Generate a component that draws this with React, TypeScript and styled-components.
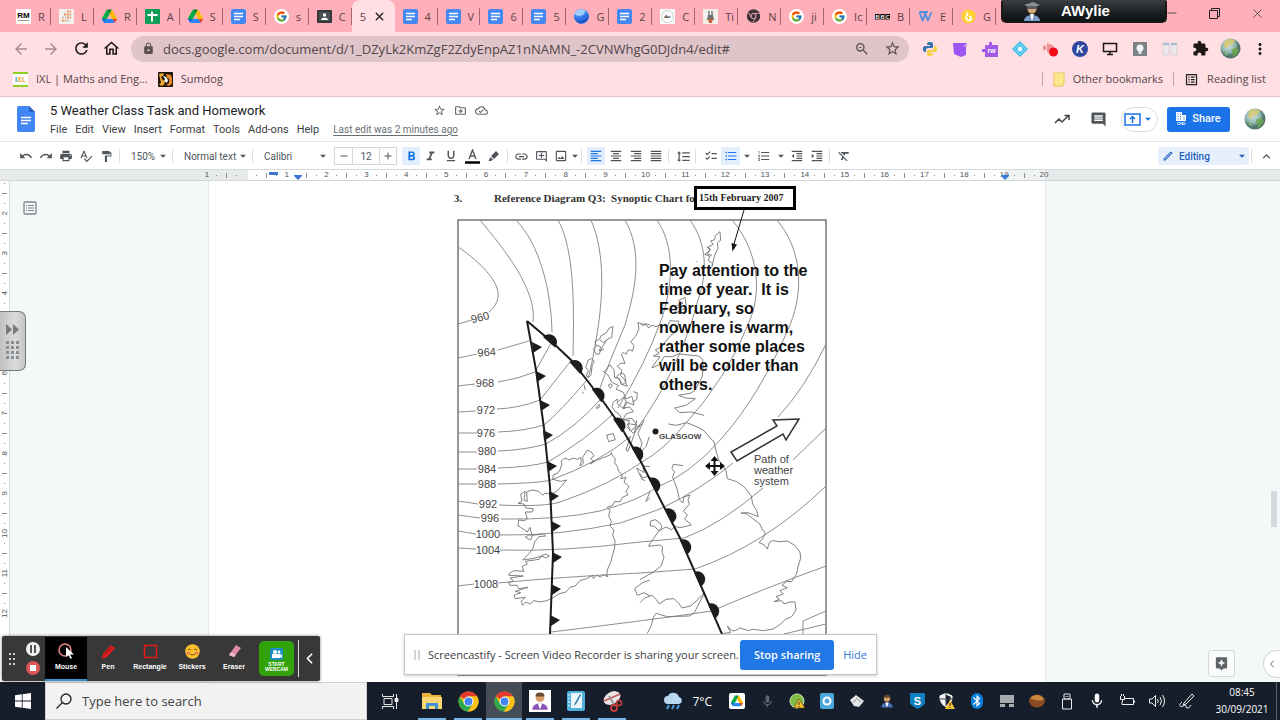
import React from 'react';
import styled, { createGlobalStyle } from 'styled-components';
import {
  MdUndo, MdRedo, MdPrint, MdSpellcheck, MdFormatPaint, MdFormatBold, MdFormatItalic, MdFormatUnderlined,
  MdLink, MdOutlineAddComment, MdOutlineImage, MdArrowDropDown, MdFormatAlignLeft, MdFormatAlignCenter,
  MdFormatAlignRight, MdFormatAlignJustify, MdFormatLineSpacing, MdChecklist, MdFormatListBulleted,
  MdFormatListNumbered, MdFormatIndentDecrease, MdFormatIndentIncrease, MdFormatClear, MdOutlineEdit,
  MdStarBorder, MdOutlineDriveFileMove, MdOutlineCloudDone, MdComment, MdExtension, MdLock, MdArrowBack,
  MdArrowForward, MdRefresh, MdOutlineHome, MdMoreVert, MdZoomOut, MdAdd, MdRemove,
  MdKeyboardArrowUp, MdOutlineListAlt, MdMic, MdBluetooth, MdAssistant,
} from 'react-icons/md';
import { FcGoogle } from 'react-icons/fc';
import { FaShieldAlt } from 'react-icons/fa';
import { Minus, X, ChevronLeft } from 'lucide-react';

const segoe = '"Open Sans", "Noto Sans", sans-serif';
const roboto = 'Roboto, "Liberation Sans", sans-serif';
const arial = '"Liberation Sans", Arial, sans-serif';

const GlobalStyle = createGlobalStyle`
  *, *::before, *::after { box-sizing: border-box; }
  body { margin: 0; overflow: hidden; font-family: ${roboto}; color: #3c4043; }
  button, input { font: inherit; color: inherit; margin: 0; }
  button { border: 0; padding: 0; background: none; display: flex; align-items: center; justify-content: center; }
  a { color: inherit; text-decoration: none; }
  svg { display: block; flex: none; }
`;

const Screen = styled.div`
  position: relative;
  display: flex;
  flex-direction: column;
  height: 100vh;
  overflow: hidden;
  background: #fff;
`;

/* ---------- browser chrome ---------- */

const TabStrip = styled.header`
  position: relative;
  display: flex;
  flex: none;
  height: 32px;
  padding-left: 8px;
  background: #ffafba;
  font-family: ${segoe};
`;
const Tabs = styled.nav`
  display: flex;
  flex: 1;
  min-width: 0;
`;
const Tab = styled.button<{ $active?: boolean }>`
  position: relative;
  flex: 1 1 0;
  min-width: 0;
  gap: 7px;
  padding: 0 4px 0 8px;
  justify-content: flex-start;
  font-size: 11px;
  color: #5d4247;
  background: ${(p) => (p.$active ? '#ffdfe3' : 'transparent')};
  border-radius: ${(p) => (p.$active ? '8px 8px 0 0' : '0')};
  &::after {
    content: '';
    position: absolute;
    right: 0;
    top: 8px;
    height: 17px;
    width: 1px;
    background: ${(p) => (p.$active ? 'transparent' : '#a5666f')};
  }
`;
const TabLabel = styled.span`
  white-space: nowrap;
`;
const WindowControls = styled.div`
  display: flex;
  justify-content: flex-end;
  flex: none;
  width: 284px;
  padding-right: 1px;
`;
const WindowButton = styled.button`
  width: 43px;
  height: 26px;
`;
const NameBadge = styled.div`
  position: absolute;
  right: 113px;
  top: 0;
  display: flex;
  align-items: center;
  gap: 20px;
  width: 166px;
  height: 23px;
  padding-left: 20px;
  border: 2px solid #17191b;
  border-top: 0;
  border-radius: 2px 2px 5px 5px;
  background: linear-gradient(#3a3e41, #1e2224 55%, #0e1011);
  color: #fff;
  font: bold 15px/20px ${arial};
`;
const AddressRow = styled.div`
  display: flex;
  align-items: center;
  flex: none;
  height: 33px;
  padding: 0 5px 0 6px;
  background: #ffdfe3;
`;
const NavButton = styled.button<{ $dim?: boolean }>`
  width: 30px;
  height: 28px;
  flex: none;
  color: ${(p) => (p.$dim ? '#a58d91' : '#1d1718')};
`;
const AddressPill = styled.div`
  display: flex;
  align-items: center;
  flex: 1;
  min-width: 0;
  height: 26px;
  margin: 0 6px 0 5px;
  padding: 0 2px 0 11px;
  border-radius: 13px;
  background: #dfc5c9;
  color: #5d5053;
`;
const AddressInput = styled.input`
  flex: 1;
  min-width: 0;
  margin-left: 8px;
  padding: 0;
  border: 0;
  outline: 0;
  background: none;
  font: 13px/20px ${segoe};
  color: #52464a;
`;
const Bookmarks = styled.nav`
  display: flex;
  align-items: center;
  flex: none;
  height: 32px;
  padding: 0 14px 3px 13px;
  background: #ffdfe3;
  border-bottom: 1px solid #dfc5c9;
  font: 11px/16px ${segoe};
  color: #54454a;
`;
const Bookmark = styled.a`
  display: flex;
  align-items: center;
  gap: 8px;
  margin-right: 10px;
  white-space: nowrap;
  &:last-child { margin-right: 0; }
`;
const BookmarkSpacer = styled.div`flex: 1;`;
const BookmarkRule = styled.span`
  width: 1px;
  height: 14px;
  margin-right: 10px;
  background: #c5a4a9;
`;

/* ---------- editor chrome ---------- */

const DocHeader = styled.header`
  display: flex;
  align-items: center;
  flex: none;
  height: 45px;
  padding: 0 14px 0 17px;
  border-bottom: 1px solid #e3e5e8;
`;
const TitleBlock = styled.div`
  display: flex;
  flex-direction: column;
  flex: 1;
  margin-left: 15px;
  padding-top: 1px;
  gap: 2px;
`;
const TitleRow = styled.div`
  display: flex;
  align-items: center;
  gap: 7px;
  height: 18px;
  color: #202124;
`;
const DocTitle = styled.h1`
  margin: 0;
  width: 375px;
  white-space: nowrap;
  font: 400 13px/18px ${roboto};
`;
const TitleButton = styled.button`
  width: 14px;
  height: 14px;
  color: #5f6368;
`;
const MenuRow = styled.nav`
  display: flex;
  align-items: center;
  gap: 8px;
  font-size: 11px;
  line-height: 16px;
  white-space: nowrap;
`;
const LastEdit = styled.a`
  margin-left: 6px;
  font-size: 10px;
  color: #6a6f74;
  text-decoration: underline;
  text-underline-offset: 2px;
`;
const HeaderActions = styled.div`
  display: flex;
  align-items: center;
  gap: 14px;
`;
const ActivityButton = styled.button`
  margin-right: 6px;
`;
const PresentButton = styled.button`
  width: 37px;
  height: 25px;
  margin-right: -5px;
  border: 1px solid #dadce0;
  border-radius: 13px;
  color: #1a73e8;
`;
const ShareButton = styled.button`
  width: 63px;
  height: 25px;
  gap: 5px;
  border-radius: 3px;
  background: #1a73e8;
  color: #fff;
  font: 500 11px/16px ${roboto};
`;
const EditToolbar = styled.div`
  display: flex;
  align-items: center;
  flex: none;
  height: 28px;
  padding: 1px 4px 0 15px;
  border-bottom: 1px solid #d6d9dc;
  font-size: 10px;
  color: #50555a;
`;
const Tool = styled.button<{ $on?: boolean; $w?: number }>`
  width: ${(p) => p.$w || 20}px;
  height: 18px;
  flex: none;
  border-radius: 2px;
  color: ${(p) => (p.$on ? '#1a73e8' : '#50555a')};
  background: ${(p) => (p.$on ? '#e3eefd' : 'none')};
`;
const ToolRule = styled.span<{ $gap?: number }>`
  flex: none;
  width: 1px;
  height: 14px;
  margin: 0 ${(p) => (p.$gap === undefined ? 4 : p.$gap)}px 0 2px;
  background: #dadce0;
`;
const Picker = styled.button<{ $w: number }>`
  width: ${(p) => p.$w}px;
  height: 18px;
  flex: none;
  justify-content: space-between;
  white-space: nowrap;
`;
const FontSize = styled.div`
  display: flex;
  align-items: center;
  flex: none;
  width: 63px;
  height: 18px;
  margin: 0 5px 0 4px;
  border: 1px solid #d5d8db;
`;
const SizeInput = styled.input`
  width: 28px;
  min-width: 0;
  height: 16px;
  padding: 0;
  border: solid #d5d8db;
  border-width: 0 1px;
  text-align: center;
  background: #fff;
`;
const Spacer = styled.span`flex: 1;`;
const ModeButton = styled.button`
  width: 91px;
  height: 18px;
  padding: 0 0 0 4px;
  gap: 5px;
  justify-content: flex-start;
  border-radius: 2px;
  background: #e6f0fd;
  color: #1f5fb8;
  font-weight: 500;
`;

/* ---------- ruler and page ---------- */

const columns = 'minmax(0, 1fr) 836px minmax(0, 1fr) 26px';

const Ruler = styled.div`
  display: grid;
  grid-template-columns: ${columns};
  flex: none;
  height: 11px;
  background: #e6eaeb;
  border-bottom: 1px solid #d3d6d9;
`;
const RulerTrack = styled.div`
  grid-column: 2;
  position: relative;
  background: linear-gradient(90deg, #e6eaeb 39px, #fff 39px 796px, #f0f3f3 796px);
`;
const RulerScale = styled.div`
  display: flex;
  margin: 0 -34px 0 -7px;
`;
const RulerCell = styled.div`
  display: grid;
  grid-template-columns: repeat(4, minmax(0, 1fr));
  flex: 1;
  justify-items: center;
  align-items: center;
  height: 10px;
  font: 8px/10px ${arial};
  color: #50555a;
`;
const RulerTick = styled.i<{ $long?: boolean }>`
  width: 1px;
  height: ${(p) => (p.$long ? 5 : 1)}px;
  background: #8a8e92;
`;
const RulerMarker = styled.svg<{ $x: number; $y: number }>`
  position: absolute;
  left: ${(p) => p.$x}px;
  top: ${(p) => p.$y}px;
`;
const Workspace = styled.main`
  position: relative;
  display: grid;
  grid-template-columns: ${columns};
  flex: 1;
  min-height: 0;
  overflow: hidden;
  background: #f5f8f8;
`;
const LeftRail = styled.aside`
  display: flex;
  align-items: flex-start;
  min-height: 0;
`;
const SideRuler = styled.div`
  flex: none;
  width: 10px;
  align-self: stretch;
  overflow: hidden;
  background: #fff;
  border-right: 1px solid #d9dcdf;
`;
const SideScale = styled.div`
  margin-top: -3px;
`;
const SideCell = styled.div`
  display: grid;
  grid-template-rows: repeat(4, 10px);
  place-items: center;
  height: 40px;
  font: 8px/9px ${arial};
  color: #50555a;
`;
const SideNumber = styled.span`
  writing-mode: vertical-rl;
  transform: rotate(180deg);
`;
const SideTick = styled.i<{ $long?: boolean }>`
  height: 1px;
  width: ${(p) => (p.$long ? 5 : 1)}px;
  background: #8a8e92;
`;
const OutlineButton = styled.button`
  margin: 20px 0 0 13px;
  color: #80868b;
`;
const Page = styled.article`
  min-height: 0;
  overflow: hidden;
  padding: 5px 0 0 245px;
  background: #fff;
  box-shadow: 0 0 2px #c5cacb;
`;
const Question = styled.h2`
  display: flex;
  align-items: center;
  margin: 0;
  height: 24px;
  white-space: nowrap;
  font: bold 11px/14px "Liberation Serif", "Times New Roman", serif;
  color: #333;
`;
const QuestionNumber = styled.span`width: 40px;`;
const QuestionText = styled.span`
  width: 200px;
  white-space: pre;
`;
const DateBox = styled.mark`
  position: relative;
  width: 102px;
  padding: 2px 0 2px 2px;
  border: 3px solid #000;
  background: #fff;
  color: #222;
  font-size: 10px;
`;
const Figure = styled.figure`
  position: relative;
  margin: 0 0 0 3px;
  width: 370px;
`;
const Note = styled.figcaption`
  position: absolute;
  left: 202px;
  top: 51px;
  width: 160px;
  white-space: pre-line;
  font: bold 16px/19px ${arial};
  color: #111;
`;
const RightRail = styled.aside`
  display: flex;
  align-items: flex-end;
  justify-content: flex-end;
  padding: 0 19px 5px 0;
`;
const ExploreButton = styled.button`
  width: 27px;
  height: 27px;
  border: 1px solid #d5d8da;
  border-radius: 3px;
  background: #fafbfb;
  color: #5f6368;
`;
const ScrollGutter = styled.div`
  display: flex;
  flex-direction: column;
  align-items: flex-end;
  min-height: 0;
`;
const ScrollThumb = styled.div`
  width: 6px;
  height: 36px;
  margin: 310px 3px 0 0;
  background: #d5d9db;
`;
const PanelToggle = styled.button`
  width: 17px;
  height: 28px;
  margin: auto 0 4px;
  border: 1px solid #d5d8da;
  border-right: 0;
  border-radius: 14px 0 0 14px;
  background: #fff;
  color: #5f6368;
`;

/* ---------- floating layers ---------- */

const SideHandle = styled.button`
  position: absolute;
  left: 0;
  top: 311px;
  flex-direction: column;
  gap: 6px;
  width: 26px;
  height: 60px;
  border: 1px solid #77797b;
  border-left: 0;
  border-radius: 0 7px 7px 0;
  background: linear-gradient(90deg, #bfc1c2, #d9dbdc 60%, #c3c5c6);
`;
const ShareNotice = styled.section`
  position: absolute;
  left: 404px;
  bottom: 45px;
  display: flex;
  align-items: center;
  width: 473px;
  height: 41px;
  padding: 0 9px;
  border: 1px solid #c4c7c9;
  background: #fff;
  box-shadow: 0 1px 3px #0003;
  white-space: nowrap;
  font: 11px/16px ${segoe};
  color: #3c4043;
`;
const NoticeText = styled.span`
  flex: 1;
  min-width: 0;
  margin-left: 8px;
`;
const StopButton = styled.button`
  width: 94px;
  height: 30px;
  flex: none;
  margin-right: 9px;
  border-radius: 3px;
  background: #1f78e6;
  color: #fff;
  font-weight: 600;
`;
const HideButton = styled.button`
  flex: none;
  color: #2f78d2;
`;

const Recorder = styled.section`
  position: absolute;
  left: 2px;
  bottom: 39px;
  display: flex;
  align-items: center;
  width: 318px;
  height: 45px;
  padding-left: 7px;
  border-radius: 2px;
  background: #383838;
  box-shadow: 0 0 3px #0008;
  color: #fff;
`;
const RecorderStack = styled.div`
  display: flex;
  flex-direction: column;
  flex: none;
  gap: 5px;
  width: 30px;
  padding-left: 6px;
  align-items: center;
`;
const RoundButton = styled.button<{ $stop?: boolean }>`
  width: 14px;
  height: 14px;
  border-radius: 7px;
  background: ${(p) => (p.$stop ? '#de5757' : '#f2f2f2')};
`;
const RecorderTool = styled.button<{ $on?: boolean }>`
  flex: none;
  flex-direction: column;
  gap: 2px;
  width: 42px;
  height: 44px;
  background: ${(p) => (p.$on ? '#000' : 'none')};
  border-bottom: 2px solid ${(p) => (p.$on ? '#3d8fc7' : 'transparent')};
  font: bold 7px/10px ${arial};
`;
const WebcamButton = styled.button`
  flex: none;
  flex-direction: column;
  width: 35px;
  height: 35px;
  margin: 0 4px;
  border-radius: 5px;
  background: #33a30b;
  font: bold 5px/5px ${arial};
`;
const CollapseButton = styled.button`
  width: 22px;
  height: 37px;
  border-left: 1px solid #ddd;
`;

/* ---------- taskbar ---------- */

const Taskbar = styled.footer`
  display: flex;
  align-items: stretch;
  flex: none;
  height: 38px;
  background: #151e2a;
  color: #fff;
  font-family: ${segoe};
`;
const StartButton = styled.button`width: 45px;`;
const SearchBox = styled.label`
  display: flex;
  align-items: center;
  gap: 10px;
  width: 322px;
  padding-left: 10px;
  border: 1px solid #cfd0d2;
  background: #f2f2f2;
  color: #222;
`;
const SearchInput = styled.input`
  flex: 1;
  min-width: 0;
  padding: 0;
  border: 0;
  outline: 0;
  background: none;
  font: 13px/20px ${segoe};
  &::placeholder { color: #444; opacity: 1; }
`;
const TaskButton = styled.button<{ $open?: boolean; $active?: boolean; $w?: number }>`
  position: relative;
  width: ${(p) => p.$w || 36}px;
  flex: none;
  background: ${(p) => (p.$active ? '#454d57' : 'none')};
  &::after {
    content: '';
    position: absolute;
    bottom: 0;
    left: ${(p) => (p.$active ? 0 : 4)}px;
    right: ${(p) => (p.$active ? 0 : 4)}px;
    height: 2px;
    background: ${(p) => (p.$open ? '#76b4e6' : 'transparent')};
  }
`;
const Tray = styled.div`
  display: flex;
  align-items: center;
  margin-left: auto;
`;
const Weather = styled.button`
  gap: 8px;
  margin-right: 10px;
  font-size: 12px;
`;
const TrayButton = styled.button`
  width: 30px;
  height: 38px;
`;
const Clock = styled.time`
  width: 68px;
  margin-left: 6px;
  text-align: center;
  font-size: 10px;
  line-height: 17px;
`;
const DesktopEdge = styled.span`
  width: 4px;
  align-self: stretch;
  border-left: 1px solid #5b626b;
`;

/* ---------- small drawings ---------- */

const DocsIcon = () => (
  <svg width="15" height="15" viewBox="0 0 15 15"><rect width="15" height="15" rx="2" fill="#4688f1" />
    <path d="M3 4.500h9M3 7.500h9M3 10.500h6" stroke="#fff" strokeWidth="1.600" /></svg>
);
const DriveIcon = () => (
  <svg width="15" height="15" viewBox="0 0 87 78"><path d="M7 67l4 6c1 2 2 3 3 3l14-23H0c0 2 .5 3 1 5z" fill="#0066da" />
    <path d="M44 25L29 0c-1 1-2 2-3 3L1 48c-.7 1-1 3-1 5h28z" fill="#00ac47" /><path d="M74 76c1-1 3-2 3-3l8-15c1-1 1-3 1-5H59l6 12z" fill="#ea4335" />
    <path d="M44 25L57 0c-1-1-3-1-4-1H34c-2 0-3 .5-5 1z" fill="#00832d" /><path d="M59 53H28L14 76c1 1 3 1 4 1h51c2 0 3 0 5-1z" fill="#2684fc" />
    <path d="M73 26L60 3c-1-1-2-2-3-3L44 25l15 28h28c0-2 0-3-1-5z" fill="#ffba00" /></svg>
);
const RmIcon = () => (
  <svg width="15" height="15" viewBox="0 0 15 15"><rect width="15" height="15" fill="#fff" /><text x="7.500" y="9" textAnchor="middle" fontSize="8" fontWeight="900" fontFamily="Liberation Sans">RM</text><path d="M2 11.500h11" stroke="#999" /></svg>
);
const DotsIcon = () => (
  <svg width="15" height="15" viewBox="0 0 15 15"><rect width="15" height="15" fill="#f5efec" /><path d="M8 2.500h4M5 5.500h7M8 8.500h4M3 11.500h4" stroke="#dc8b5b" strokeWidth="1.800" strokeDasharray="1.800 1" /><path d="M3 8.500h4M8 11.500h2" stroke="#c6bcb8" strokeWidth="1.800" strokeDasharray="1.800 1" /></svg>
);
const SheetIcon = () => (
  <svg width="15" height="15" viewBox="0 0 15 15"><rect width="15" height="15" rx="1" fill="#0f9d58" /><path d="M2.500 6h10M7 2.500v10" stroke="#fff" strokeWidth="2" /></svg>
);
const GoogleIcon = () => (
  <svg width="15" height="15" viewBox="0 0 15 15"><circle cx="7.500" cy="7.500" r="7.500" fill="#fff" /><g transform="translate(1.500 1.500)"><FcGoogle size={12} /></g></svg>
);
const ClassIcon = () => (
  <svg width="15" height="15" viewBox="0 0 15 15"><rect y="1" width="15" height="13" rx="1" fill="#34383b" /><rect x="2" y="3" width="11" height="9" fill="#4b5054" /><circle cx="7.500" cy="6" r="1.700" fill="#fff" /><path d="M4 11c0-3 7-3 7 0z" fill="#fff" /></svg>
);
const EarthIcon = () => (
  <svg width="15" height="15" viewBox="0 0 15 15"><circle cx="7.500" cy="7.500" r="7.500" fill="#3f86ee" /><path d="M.5 5C2 1 7-1 11 1c1 5-6 8-10.500 4z" fill="#a3cdfb" /><path d="M0 8c5 3 9 0 13-4l2 3c-1 5-9 8-14 4z" fill="#2f6fe0" /><path d="M2 12c5 1 9-1 13-5-1 6-8 10-13 5z" fill="#1d50b8" /></svg>
);
const DscIcon = () => (
  <svg width="15" height="15" viewBox="0 0 15 15"><rect width="15" height="15" fill="#fbfbfb" /><circle cx="7.500" cy="7.500" r="6" fill="none" stroke="#c9d2c9" /><text x="7.500" y="9" textAnchor="middle" fontSize="5" fontWeight="700" fontStyle="italic" fontFamily="Liberation Serif">dsc</text></svg>
);
const KnightIcon = () => (
  <svg width="15" height="15" viewBox="0 0 15 15"><rect width="15" height="15" fill="#f2eeea" /><path d="M5 2h5v4H5z" fill="#999" /><path d="M5 6h5l1 5H4z" fill="#6d7173" /><path d="M5 10h5l-1 4H6z" fill="#c4653a" /><path d="M7.500 1v5" stroke="#fff" /></svg>
);
const DarkChromeIcon = () => (
  <svg width="15" height="14" viewBox="0 0 15 14"><circle cx="7.500" cy="7" r="6.700" fill="#3b3337" /><circle cx="7.500" cy="7" r="2.600" fill="#3b3337" stroke="#ffafba" strokeWidth="1" /><path d="M7.500 4.400h6M5.200 8.300L2.300 3.300M9.800 8.300l-3 5" stroke="#ffafba" strokeWidth=".8" /></svg>
);
const BbcIcon = () => (
  <svg width="15" height="15" viewBox="0 0 15 15"><path d="M0 5h4.600v5.500H0zM5.200 5h4.600v5.500H5.200zM10.400 5H15v5.500h-4.600z" fill="#000" /><g fill="#fff" fontSize="5" fontWeight="700" fontFamily="Liberation Sans"><text x="0.500" y="9.600">B</text><text x="5.700" y="9.600">B</text><text x="10.900" y="9.600">C</text></g></svg>
);
const WIcon = () => (
  <svg width="15" height="15" viewBox="0 0 15 15"><path d="M1.500 3l3 8.500L7.500 5l2.500 6.500L13.500 3M1.500 3h4l4 7M6 3h4" fill="none" stroke="#4f91dd" strokeWidth="1.800" strokeLinejoin="round" /></svg>
);
const YellowIcon = () => (
  <svg width="15" height="15" viewBox="0 0 15 15"><circle cx="7.500" cy="7.500" r="7" fill="#fdd32f" /><path d="M7 3.500C4 8 5 11.500 8 11.500s3-4 0-4" fill="none" stroke="#fff" strokeWidth="1.800" /></svg>
);
const GlobeAvatar = ({ size }: { size: number }) => (
  <svg width={size} height={size} viewBox="0 0 22 22"><defs><radialGradient id="globe" cx=".4" cy=".35"><stop offset="0" stopColor="#d3e3e0" /><stop offset=".7" stopColor="#8fb5b1" /><stop offset="1" stopColor="#52756f" /></radialGradient></defs>
    <circle cx="11" cy="11" r="10.500" fill="url(#globe)" /><path d="M5 3c4-3 9-2 11 0l-3 4-4 1-2 3-3-2z" fill="#d8ca6c" opacity=".8" /><path d="M12 12l5-2 3 3-3 5-3 2z" fill="#6da64a" opacity=".8" /><path d="M3 13l4 2 1 4-3-2z" fill="#7fb074" /></svg>
);
const PythonIcon = () => (
  <svg width="16" height="16" viewBox="0 0 16 16"><path d="M8 1C5 1 5 2 5 4h3v1H3c-3 0-3 6 0 6h1V9c0-1 1-2 2-2h4c1 0 1-1 1-2V3c0-2-2-2-3-2z" fill="#3776ab" /><path d="M8 15c3 0 3-1 3-3H8v-1h5c3 0 3-6 0-6h-1v2c0 1-1 2-2 2H6c-1 0-1 1-1 2v2c0 2 2 2 3 2z" fill="#f5cf45" /></svg>
);
const PurpleIcon = () => (
  <svg width="16" height="16" viewBox="0 0 16 16"><path d="M1 2h14l-1 4v8l-5 2-7-3z" fill="#9a55f2" /><path d="M11 5l4-3-1 4z" fill="#c99cf6" /></svg>
);
const RwIcon = () => (
  <svg width="16" height="16" viewBox="0 0 16 16"><path d="M3 4h4V1h3v3h6v12H3v-5H0V8h3z" fill="#a45ae8" /><text x="9.500" y="12" textAnchor="middle" fill="#fff" fontSize="7" fontWeight="700" fontFamily="Liberation Sans">rw</text></svg>
);
const DiamondIcon = () => (
  <svg width="16" height="16" viewBox="0 0 16 16"><path d="M8 0l8 8-8 8-8-8z" fill="#35bde8" /><path d="M8 2.500L13.500 8 8 13.500 2.500 8z" fill="none" stroke="#a9e6f7" /><circle cx="8" cy="8" r="2.500" fill="#e3f8fd" /></svg>
);
const RecordIcon = () => (
  <svg width="16" height="16" viewBox="0 0 16 16"><path d="M1 5l3-1v5H1zM5 2l7 3-2 7-5-1z" fill="#ef8f96" /><circle cx="11.500" cy="11" r="4.500" fill="#f10d16" /></svg>
);
const KIcon = () => (
  <svg width="16" height="16" viewBox="0 0 16 16"><circle cx="8" cy="8" r="8" fill="#3047a0" /><text x="8" y="12" textAnchor="middle" fill="#fff" fontSize="11" fontWeight="700" fontStyle="italic" fontFamily="Liberation Sans">K</text></svg>
);
const CastIcon = () => (
  <svg width="16" height="14" viewBox="0 0 16 14"><path d="M1.500 1.500h13v8h-13zM8 10v2.500M5 12.500h6" fill="none" stroke="#1d1718" strokeWidth="1.500" /></svg>
);
const BulbIcon = () => (
  <svg width="16" height="16" viewBox="0 0 16 16"><rect x="1" y="1" width="14" height="14" fill="#7b8185" /><circle cx="8" cy="7" r="3.500" fill="#f1f6f8" /><path d="M6.500 10h3v3h-3z" fill="#e3e6e8" /></svg>
);
const PanesIcon = () => (
  <svg width="16" height="16" viewBox="0 0 16 16"><path d="M1 2h6v12H1zM9 2h6v12H9z" fill="#eae8eb" stroke="#cfcbd0" strokeWidth=".7" /><path d="M1 2h6v2H1zM9 2h6v2H9z" fill="#a9bdd3" /></svg>
);
const IxlIcon = () => (
  <svg width="15" height="15" viewBox="0 0 15 15"><rect width="15" height="15" fill="#fff" /><path d="M0 1h15M0 14h15" stroke="#8ed122" strokeWidth="2" /><text x="7.500" y="10" textAnchor="middle" fontSize="7" fontWeight="700" fontFamily="Liberation Sans" fill="#f2a51e"><tspan fill="#1f8fd0">I</tspan>XL</text></svg>
);
const SumdogIcon = () => (
  <svg width="15" height="15" viewBox="0 0 15 15"><rect width="15" height="15" rx="1" fill="#1d1509" /><path d="M1 2l4-1 1 2-3 2 1 2 3 3-1 3-3 1-2-2 2-1z" fill="#f0a62e" /><path d="M8 2l5 1 1 3v6l-3 2-3-1 3-2V7l-2-1z" fill="#e8862a" /><path d="M5 4l3 1 2 3-1 3-3-2 1-2z" fill="#fff" /></svg>
);
const FolderIcon = () => (
  <svg width="12" height="15" viewBox="0 0 12 15"><path d="M1 1h10v10l-1 1v2H1z" fill="#fce78f" stroke="#e8c752" /></svg>
);
const Graduate = () => (
  <svg width="18" height="20" viewBox="0 0 18 20"><circle cx="9" cy="8" r="4.500" fill="#d9a877" /><path d="M1 4l9-3 7 3-8 3z" fill="#8b9097" /><path d="M4 5h10v3H4z" fill="#5a5e64" /><path d="M1 20c0-8 16-8 16 0z" fill="#7f9bc9" /><path d="M7 13l2 7 2-7z" fill="#fff" /></svg>
);
const PersonIcon = ({ size, card }: { size: number; card?: boolean }) => (
  <svg width={size} height={size} viewBox="0 0 20 20">{card && <rect width="20" height="20" fill="#fff" />}<circle cx="10" cy="7" r="4" fill="#d5a068" /><path d="M6 6c-1-5 9-5 8 0z" fill="#6b4a34" /><path d="M3 18c0-8 14-8 14 0z" fill={card ? '#8d52b5' : '#4c72b7'} /><path d="M8 12l2 6 2-6z" fill="#fff" /></svg>
);
const ChromeIcon = () => (
  <svg width="21" height="21" viewBox="0 0 22 22"><circle cx="11" cy="11" r="10.500" fill="#fbc116" /><path d="M11 11L1.900 5.750A10.500 10.500 0 0 1 20.100 5.750H11z" fill="#e33b2e" /><path d="M1.900 5.750A10.500 10.500 0 0 0 10.500 21.500L15.500 13.600 11 11 6.500 13.600z" fill="#2da94f" /><path d="M11 5.750h9.100A10.500 10.500 0 0 1 10.500 21.500l5-7.900z" fill="#fbc116" /><circle cx="11" cy="11" r="5.200" fill="#fff" /><circle cx="11" cy="11" r="4.100" fill="#4285f4" /></svg>
);
const ExplorerIcon = () => (
  <svg width="20" height="18" viewBox="0 0 20 18"><path d="M0 1h8l2 2h9v14H0z" fill="#e9b23d" /><path d="M0 5h20v12H0z" fill="#fbd673" /><path d="M4 17v-6h12v6h-3v-3H7v3z" fill="#3d94d2" /></svg>
);
const NotebookIcon = () => (
  <svg width="20" height="20" viewBox="0 0 20 20"><rect x="1" width="18" height="20" rx="2" fill="#4fb0dd" /><path d="M5 2h11v15H5z" fill="#e9f6fc" /><path d="M14 3l-5 9-1 3 2-2 5-9z" fill="#226d9d" /><path d="M3 3v14" stroke="#fff" strokeDasharray="2 1.500" /></svg>
);
const SnipIcon = () => (
  <svg width="22" height="22" viewBox="0 0 22 22"><ellipse cx="11" cy="8" rx="9" ry="6" transform="rotate(-30 11 8)" fill="#ece4e4" /><path d="M3 11L19 4" stroke="#c25a5a" strokeWidth="1.500" /><path d="M8 6l6 10" stroke="#9a9a9a" strokeWidth="2" /><circle cx="13" cy="18" r="3" fill="none" stroke="#c83b3b" strokeWidth="1.800" /><circle cx="18" cy="13" r="2.500" fill="none" stroke="#c83b3b" strokeWidth="1.500" /></svg>
);
const TaskViewIcon = () => (
  <svg width="17" height="15" viewBox="0 0 17 15" fill="none" stroke="#e6e8ea"><path d="M2 4.500h8v6H2zM.5 0v2.500h11V0M.5 15v-2.500h11V15M14.500 0v15" /><path d="M13 4.500h3v3h-3z" fill="#e6e8ea" /></svg>
);
const CloudIcon = () => (
  <svg width="21" height="19" viewBox="0 0 21 19"><path d="M5 12a4 4 0 0 1 0-8 6 6 0 0 1 11 1 3.600 3.600 0 0 1 0 7z" fill="#b9d9f2" /><path d="M6 13l-2 4M11 13l-2 4M16 13l-2 4" stroke="#4aa0e3" strokeWidth="2" /></svg>
);
const SearchGlyph = () => (
  <svg width="16" height="16" viewBox="0 0 16 16" fill="none" stroke="#222" strokeWidth="1.300"><circle cx="10" cy="6" r="5" /><path d="M6.500 9.500L.5 15.500" /></svg>
);
const Caret = ({ color }: { color?: string }) => <MdArrowDropDown size={14} color={color} />;

/* ---------- synoptic chart ---------- */

const isobars = [
  'M458 247C475 258 497 278 498 293C499 301 494 308 489 312',
  'M480 220C505 250 537 290 533 322',
  'M516 220C540 245 551 290 552 332',
  'M558 220C575 250 574 310 573 356',
  'M591 220C606 255 603 300 596 340Q591 370 588 378',
  'M625 220C642 250 637 285 625 325Q608 365 600 388',
  'M657 220C674 245 674 280 662 318Q645 365 618 408',
  'M690 220C708 245 707 275 698 300Q680 370 634 433',
  'M732 220C758 250 762 290 750 320Q728 378 680 430Q660 452 645 460',
  'M777 220C802 250 804 290 790 325Q760 395 722 438Q690 475 655 488',
  'M826 344Q805 388 778 417M733 463Q700 490 662 508',
  'M826 428L793 460M763 488Q720 525 684 538',
  'M826 486Q765 545 695 569',
  'M826 566Q760 590 712 611Q650 620 551 632',
  'M826 611L803 621V634M826 624L784 634',
  'M458 324L472 320M458 358L477 354M498 350L529 341',
  'M458 386L475 384M498 382Q518 379 535 372L551 343',
  'M458 412L476 411M497 409Q520 408 540 400L570 362',
  'M458 433H477M498 432Q525 431 544 425Q560 412 586 381',
  'M458 452H477M498 451Q525 450 546 444Q575 428 600 400',
  'M458 469H477M498 468Q530 467 548 462Q585 440 612 415',
  'M458 484H477M498 484Q540 483 551 480Q600 462 630 437',
  'M458 501L478 504M499 505Q545 507 560 502Q610 485 645 460',
  'M458 515L480 518M501 519Q560 520 600 511Q640 500 655 488',
  'M458 531L476 534M500 535Q560 536 620 523Q650 513 662 508',
  'M458 548L476 549M500 550Q560 552 640 542L684 538',
  'M458 586L474 584M498 583Q560 577 640 573L695 569',
];

const labels: [string, number, number, number][] = [
  ['960', 481, 321, -14], ['964', 487, 356, -5], ['968', 485, 387, 0], ['972', 486, 414, 0], ['976', 486, 437, 0],
  ['980', 487, 455, 0], ['984', 487, 473, 0], ['988', 487, 488, 0], ['992', 488, 508, 0], ['996', 490, 522, 0],
  ['1000', 488, 538, 0], ['1004', 488, 554, 0], ['1008', 486, 588, 0],
];

const coldMarks = [[533, 348], [537, 377], [541, 406], [544, 436], [548, 467], [550, 497], [552, 527], [553, 558], [552, 590], [551, 621]];
const warmMarks = [[551, 340, 42], [577, 366, 48], [599, 394, 54], [620, 424, 57], [638, 453, 60], [655, 484, 62], [671, 515, 63], [686, 546, 65], [700, 578, 66], [714, 610, 66]];

const ireland = 'M310 165L322 160 330 150 336 132 333 124 345 114 358 120 370 114 382 118 392 112 394 124 390 138 400 130 398 112 412 90 424 96 432 108 422 116 432 124 420 132 440 121 462 112 480 105 484 98 488 108 496 116 494 128 502 140 506 154 518 166 512 176 528 172 522 186 537 200 528 214 534 224 518 232 510 246 494 244 488 256 472 262 480 272 476 288 484 304 480 318 492 330 488 346 495 362 494 384 488 404 482 428 474 444 470 462 474 470 458 464 452 472 440 466 430 476 428 466 410 476 390 482 376 498 360 502 348 516 326 522 308 534 290 542 270 546 252 542 240 552 228 546 217 556 214 544 226 532 196 536 192 526 212 518 196 514 234 502 206 506 202 496 180 496 176 488 190 482 180 474 220 468 176 466 178 460 192 452 222 454 216 440 232 432 226 424 268 418 274 408 288 414 298 408 286 402 270 410 246 416 218 420 232 406 248 388 254 366 266 350 288 348 280 342 248 346 242 360 226 352 238 344 246 346 240 322 232 336 212 322 204 318 206 300 224 302 232 296 226 276 246 276 250 266 228 264 222 252 204 250 216 244 212 222 226 214 222 240 232 244 230 216 246 210 266 214 278 226 284 220 304 222 320 214 340 192 350 180 332 184 308 178z';
const scotlandWest = 'M600 345l-14-4-8 2-14-6 3 20-10 22-15 16 10 12-4 16-12-4-8 14-6-6-8 6 6 14 5 14-13-2-10 10 14 12-4 16 12 12 8 20-18-6-6-18-14-2-2-24-12-14-14 16-6 4 14 10 12 22 20 10-8 10 22 10 8 20 18-8 6 26-22-8-8 20-20-16 0-14-12 10-4 12 8 14 10 6 14 20 28-4 14 20-26-4 6 22 22-14 14-6M500 500l14-12 10 6 4 22-10 8-8-12zM550 545l12 4-2 20-12 6M505 575l16-14 8 14-10 20 20-4 12 14-22 6-10 18 20 4-8 14';
const scotlandEast = 'M0 340l8 6 10-2 8 10 10-8 12 4 10-5 24 3 8-16 26 2-4 28-20 14-28 34-18 10 12 10-18 8 20 2-20 26-4 8 22-10 14-24 26 0 18-8 60 6 12 10 2 24-4 30-22 40-14 8-34 6 20 8 30 2-28 20-34 8 14 14 34-2 40 10';
const hebrides = 'M435 395l14-8 4-10 16-8 8-14 12-6-4 34-12 4-14 20-12 26-10-2-6-14 8-8zM440 405l12 6-4 12 14-6M450 390l10 8 10-8M415 450l10-4 8 8-6 10-4 30-6 8-8-4 6-16-8-10zM402 524l4 16M398 545l2 6M440 590l8-6 2 6-10 6zM475 525l8-4 4 6-6 8z';
const northIsles = 'M240 65l-14 12-2 12-12 4 8 10-16 8 8 8-18 14 16 6-6 12 14 10-2 8 8-34 10-20-2-16 10-8zM200 110l10 10-8 12 14 4M135 262l-20 10 14 8-26 10 22 6-16 14 30-18-2-16zM168 152l4 4';
const england = 'M85 12L109 16 140 8 165 18 190 30 222 66 228 92 236 120 258 152 262 176 290 185 312 200 334 228 338 252 350 272 355 290 325 278 303 279 322 282 338 296 358 310 366 326 376 340 368 356 357 368 372 374 382 387 388 368 398 362 420 365 442 363 464 376 480 396 482 415 474 440 470 462 455 485 440 484 426 496 442 503 420 512 430 522 408 530 418 538 402 545 425 542 432 552 450 546 465 546 468 570 455 590 436 598 422 612 400 627 370 632 340 628 325 632 300 624 286 632 275 632 262 618 272 638 250 640';
const walesAndWest = 'M0 160l8 14 18-6 18 16M130 137l-30-4-4 12 8 10-6 16 14 38 6 30 10 10 4-18 18-6-6 14 4 14-18 20 12 12-8 12 20 18-34 8-14-4-12 10-16-8-22 12-12-14-14-2 2-14 14-4 14 10 6 12-18 24-18 26-4 8 34-4 8 6-2 16 6 14-8 26-24 20-16 8-24 14M0 548l14-14 22-8 14 14 8 12 20-14 24-2 14 14 10 14 26-6 20-18 22-22-32 62-14 8-66 2-34-10-8 12-6 24-12 24';
const clyde = 'M560 0l-6 40-20 54-6-4 14-42M582 0l-18 40 12 30-8 30 20-20 10-30M530 20l20 20 20-22M600 140l-20-2 2 20-22-14 16 34 10 4M600 215l-12 30 12-12M470 45l20-4 6 18-20 6zM600 480l-22 8-24 18 8 20 20-8 18 10';

const SynopticChart = () => (
  <svg width="370" height="472" viewBox="457 210 370 472" role="img" aria-label="Synoptic chart">
    <rect x="458" y="220" width="368" height="455" fill="#fff" stroke="#777" strokeWidth="1.500" />
    <g fill="none" stroke="#8e8e8e">{isobars.map((d) => <path key={d} d={d} />)}</g>
    <g fill="none" stroke="#777" strokeWidth="2.800" strokeLinejoin="round">
      <g transform="translate(450 210) scale(.3333)"><path d={scotlandWest} /><path d={hebrides} /></g>
      <g transform="translate(640 210) scale(.3333)"><path d={scotlandEast} /><path d={northIsles} /></g>
      <g transform="translate(450 420) scale(.3333)"><path d={ireland} /><path d={clyde} /></g>
      <g transform="translate(640 420) scale(.3333)"><path d={england} /><path d={walesAndWest} /></g>
    </g>
    <g fill="none" stroke="#1c1c1c" strokeWidth="2">
      <path d="M527 321L536 370L544 428L550 487L553 553L550 634L546 675" />
      <path d="M527 321L552 342L572 361L600 397L620 425L640 460L680 538L722 634L737 675" />
    </g>
    <g fill="#1c1c1c">
      {coldMarks.map(([x, y]) => <path key={y} d={`M${x - 1} ${y - 6}l10 5-9 6z`} />)}
      {warmMarks.map(([x, y, a]) => <path key={y} transform={`translate(${x} ${y}) rotate(${a})`} d="M-8 3A8 8 0 1 1 8 3z" />)}
      <circle cx="655.500" cy="431.500" r="3" />
    </g>
    <g fontFamily="Liberation Sans" fontSize="11" fill="#444" stroke="none">
      {labels.map(([t, x, y, r]) => <text key={t} x={x} y={y} textAnchor="middle" transform={`rotate(${r} ${x} ${y})`}>{t}</text>)}
      <text x="659" y="438.500" fontSize="8" fontWeight="700">GLASGOW</text>
      <text x="754" y="463">Path of</text>
      <text x="754" y="474">weather</text>
      <text x="754" y="485">system</text>
    </g>
    <path d="M731 452L737 461L783 434L786 440L799 419L773 420L777 426z" fill="#fff" stroke="#333" strokeWidth="1.500" />
    <path d="M744 210L734 244" stroke="#111" /><path d="M731.500 243l5.500 1.500-4.500 7z" fill="#111" />
    <g stroke="#111" strokeWidth="2" fill="#111"><path d="M706 466h17M714.500 458v16" /><path stroke="none" d="M705 466l5-4v8zM725 466l-5-4v8zM714.500 456l4 5h-8zM714.500 476l4-5h-8z" /></g>
  </svg>
);

/* ---------- data ---------- */

const tabs: { id: string; label: string; icon?: React.ReactNode }[] = [
  { id: 'rm', label: 'R', icon: <RmIcon /> }, { id: 'lu', label: 'L', icon: <DotsIcon /> },
  { id: 'd1', label: 'R', icon: <DriveIcon /> }, { id: 'sh', label: 'A', icon: <SheetIcon /> },
  { id: 'd2', label: 'S', icon: <DriveIcon /> }, { id: 'g1', label: 'S', icon: <DocsIcon /> },
  { id: 'go', label: 's', icon: <GoogleIcon /> }, { id: 'cl', label: 'C', icon: <ClassIcon /> },
  { id: 'active', label: '5' },
  { id: 'g4', label: '4', icon: <DocsIcon /> }, { id: 'gv', label: 'V', icon: <DocsIcon /> },
  { id: 'g6', label: '6', icon: <DocsIcon /> }, { id: 'g5', label: '5', icon: <DocsIcon /> },
  { id: 'ea', label: 'G', icon: <EarthIcon /> }, { id: 'g2', label: '2', icon: <DocsIcon /> },
  { id: 'ds', label: 'C', icon: <DscIcon /> }, { id: 'kn', label: 'Ti', icon: <KnightIcon /> },
  { id: 'nt', label: 'N', icon: <DarkChromeIcon /> }, { id: 'ji', label: 'ji', icon: <GoogleIcon /> },
  { id: 'ic', label: 'Ic', icon: <GoogleIcon /> }, { id: 'bb', label: 'B', icon: <BbcIcon /> },
  { id: 'we', label: 'E', icon: <WIcon /> }, { id: 'ye', label: 'G', icon: <YellowIcon /> },
];
const extensions: [string, React.ReactNode][] = [
  ['Python', <PythonIcon />], ['Notes', <PurpleIcon />], ['Read and write', <RwIcon />], ['Diamond', <DiamondIcon />],
  ['Screencastify', <RecordIcon />], ['Kami', <KIcon />], ['Cast', <CastIcon />], ['Keep', <BulbIcon />],
  ['Panes', <PanesIcon />], ['Extensions', <MdExtension size={17} />],
];
const menus = ['File', 'Edit', 'View', 'Insert', 'Format', 'Tools', 'Add-ons', 'Help'];
const rulerNumbers = ['1', '', ...Array.from({ length: 20 }, (_, i) => String(i + 1))];
const sideNumbers = Array.from({ length: 11 }, (_, i) => i + 2);
const tray: [string, React.ReactNode][] = [
  ['Drive', <svg width="16" height="16" viewBox="0 0 16 16"><rect width="16" height="16" rx="2" fill="#fff" /><g transform="translate(2 2) scale(.8)"><DriveIcon /></g></svg>],
  ['Microphone off', <MdMic size={15} color="#5f676f" />],
  ['Monitor', <svg width="16" height="16" viewBox="0 0 16 16"><circle cx="8" cy="8" r="7" fill="#7dbb42" stroke="#d5e8c5" /><path d="M10 6l6 9H5z" fill="#f7c52f" stroke="#4d3e10" strokeWidth=".6" /><path d="M10 9v3M10 13v1" stroke="#222" /></svg>],
  ['Camera', <svg width="14" height="16" viewBox="0 0 14 16"><rect width="14" height="16" rx="2" fill="#4aa8dd" /><circle cx="7" cy="8" r="3.500" fill="none" stroke="#fff" strokeWidth="2" /></svg>],
  ['Tag', <svg width="16" height="16" viewBox="0 0 16 16"><path d="M1 7l6-5 8 6-5 6-5-1z" fill="#e4e4e6" /><path d="M7 5l5 4M4 9l3-2" stroke="#8f9298" /></svg>],
  ['User', <PersonIcon size={16} />],
  ['Sophos', <svg width="15" height="16" viewBox="0 0 15 16"><path d="M0 0h15v10c0 2-7 6-7.500 6S0 12 0 10z" fill="#0f80c1" /><text x="7.500" y="11.500" textAnchor="middle" fontSize="11" fontWeight="700" fill="#fff" fontFamily="Liberation Sans">S</text></svg>],
  ['Security', <svg width="16" height="16" viewBox="0 0 16 16"><FaShieldAlt size={14} color="#f4f4f4" /><path d="M7 0v13M1 6h12" stroke="#333a44" /><path d="M11 7l5 9H6z" fill="#f7c52f" /><path d="M11 10v3M11 14v1" stroke="#222" /></svg>],
  ['Bluetooth', <svg width="12" height="16" viewBox="0 0 12 16"><rect width="12" height="16" rx="6" fill="#0a7ed9" /><g transform="translate(-1 1)"><MdBluetooth size={14} color="#fff" /></g></svg>],
  ['Touchpad', <svg width="14" height="14" viewBox="0 0 14 14"><path d="M0 1h14v8H0zM0 10h5v3H0zM9 10h5v3H9z" fill="#a7a9ac" /></svg>],
  ['Planet', <svg width="16" height="14" viewBox="0 0 16 14"><ellipse cx="8" cy="7" rx="8" ry="6.500" fill="#8a4c25" /><path d="M1 4c5-4 10-4 14 1-5 3-9 1-14-1z" fill="#c98a3c" /></svg>],
  ['USB', <svg width="12" height="17" viewBox="0 0 12 17" fill="none" stroke="#e5e7ea"><path d="M3 1h6v5H3zM1.500 6h9v10h-9zM5 3v1M7 3v1" /></svg>],
  ['Microphone', <MdMic size={18} color="#fff" />],
  ['Battery', <svg width="16" height="14" viewBox="0 0 16 14" fill="none" stroke="#f0f1f2"><path d="M6 4.500h8.500v6H3V8M15.500 6.500v2" /><path d="M1.500 2v3.500h4V2M2.500 0v2M4.500 0v2M3.500 5.500V8" /></svg>],
  ['Volume', <svg width="17" height="14" viewBox="0 0 17 14" fill="none" stroke="#f0f1f2"><path d="M.5 5v4h2.500l3.500 3.500v-11L3 5zM8.500 5q1.500 2 0 4M11 3q3 4 0 8M13.500 1q4 6 0 12" /></svg>],
  ['Pen', <svg width="16" height="16" viewBox="0 0 16 16" fill="none" stroke="#f0f1f2"><path d="M5 10l8-9 2 2-8 8-3 1zM3 9c-4 3-2 6 1 4s3-1 3 1 4 1 5-2" /></svg>],
];

export default function App() {
  return (
    <Screen>
      <GlobalStyle />
      <TabStrip>
        <Tabs aria-label="Open tabs">
          {tabs.map((t) => (
            <Tab key={t.id} $active={!t.icon}>
              {t.icon}
              <TabLabel>{t.label}</TabLabel>
              {!t.icon && <X size={13} strokeWidth={2.6} color="#222" />}
            </Tab>
          ))}
        </Tabs>
        <WindowControls>
          <WindowButton aria-label="Minimise"><Minus size={14} strokeWidth={1.5} /></WindowButton>
          <WindowButton aria-label="Restore"><svg width="11" height="11" viewBox="0 0 11 11" fill="none" stroke="#222"><path d="M.5 2.500h8v8h-8zM2.500 2.500v-2h8v8h-2" /></svg></WindowButton>
          <WindowButton aria-label="Close"><X size={15} strokeWidth={1.3} /></WindowButton>
        </WindowControls>
        <NameBadge><Graduate />AWylie</NameBadge>
      </TabStrip>

      <AddressRow>
        <NavButton $dim aria-label="Back"><MdArrowBack size={18} /></NavButton>
        <NavButton $dim aria-label="Forward"><MdArrowForward size={18} /></NavButton>
        <NavButton aria-label="Reload"><MdRefresh size={19} /></NavButton>
        <NavButton aria-label="Home"><MdOutlineHome size={19} /></NavButton>
        <AddressPill>
          <MdLock size={13} />
          <AddressInput aria-label="Address" readOnly value="docs.google.com/document/d/1_DZyLk2KmZgF2ZdyEnpAZ1nNAMN_-2CVNWhgG0DJdn4/edit#" />
          <NavButton aria-label="Zoom"><MdZoomOut size={16} color="#5d5053" /></NavButton>
          <NavButton aria-label="Bookmark this page"><MdStarBorder size={17} color="#5d5053" /></NavButton>
        </AddressPill>
        {extensions.map(([name, icon]) => <NavButton key={name} aria-label={name}>{icon}</NavButton>)}
        <NavButton aria-label="Profile"><GlobeAvatar size={21} /></NavButton>
        <NavButton aria-label="More"><MdMoreVert size={18} /></NavButton>
      </AddressRow>

      <Bookmarks>
        <Bookmark href="#ixl"><IxlIcon />IXL | Maths and Eng...</Bookmark>
        <Bookmark href="#sumdog"><SumdogIcon />Sumdog</Bookmark>
        <BookmarkSpacer />
        <BookmarkRule />
        <Bookmark href="#other"><FolderIcon />Other bookmarks</Bookmark>
        <BookmarkRule />
        <Bookmark href="#reading"><MdOutlineListAlt size={15} color="#222" />Reading list</Bookmark>
      </Bookmarks>

      <DocHeader>
        <svg width="18" height="26" viewBox="0 0 18 26"><path d="M2 0h10l6 6v18a2 2 0 0 1-2 2H2a2 2 0 0 1-2-2V2a2 2 0 0 1 2-2z" fill="#4285f4" /><path d="M12 0l6 6h-6z" fill="#2a63c5" /><path d="M4 11.500h10M4 14.500h10M4 17.500h7" stroke="#fff" strokeWidth="1.400" /></svg>
        <TitleBlock>
          <TitleRow>
            <DocTitle>5 Weather Class Task and Homework</DocTitle>
            <TitleButton aria-label="Star"><MdStarBorder size={13} /></TitleButton>
            <TitleButton aria-label="Move"><MdOutlineDriveFileMove size={13} /></TitleButton>
            <TitleButton aria-label="Saved to Drive"><MdOutlineCloudDone size={13} /></TitleButton>
          </TitleRow>
          <MenuRow>
            {menus.map((m) => <button key={m}>{m}</button>)}
            <LastEdit href="#history">Last edit was 2 minutes ago</LastEdit>
          </MenuRow>
        </TitleBlock>
        <HeaderActions>
          <ActivityButton aria-label="Activity"><svg width="16" height="10" viewBox="0 0 16 10" fill="none" stroke="#444" strokeWidth="1.500"><path d="M1 9l4-4 3 3 6-6M10.500 1.500H15V6" /></svg></ActivityButton>
          <button aria-label="Comments"><MdComment size={17} color="#50555a" /></button>
          <PresentButton aria-label="Present"><svg width="17" height="13" viewBox="0 0 17 13" fill="none" stroke="#1a73e8" strokeWidth="1.500"><path d="M1 1h15v11H1zM8.500 10V4M6 6l2.500-2.500L11 6" /></svg><Caret /></PresentButton>
          <ShareButton><svg width="11" height="14" viewBox="0 0 11 14" fill="#fff"><path d="M0 0h6v3h4v6H0z" /><path d="M1.500 2h1M4 2h1M1.500 4.500h1M4 4.500h1M1.500 7h1M4 7h1M7.500 5h1M7.500 7h1" stroke="#1a73e8" /><path d="M4.500 10.500h-2a1 1 0 0 0 0 2h2M6 10.500h2a1 1 0 0 1 0 2H6M4 11.500h3" fill="none" stroke="#fff" strokeWidth=".8" /></svg>Share</ShareButton>
          <GlobeAvatar size={22} />
        </HeaderActions>
      </DocHeader>

      <EditToolbar>
        <Tool aria-label="Undo" $w={21}><MdUndo size={14} /></Tool>
        <Tool aria-label="Redo"><MdRedo size={14} /></Tool>
        <Tool aria-label="Print"><MdPrint size={14} /></Tool>
        <Tool aria-label="Spelling"><MdSpellcheck size={14} /></Tool>
        <Tool aria-label="Paint format" $w={21}><MdFormatPaint size={13} /></Tool>
        <ToolRule $gap={11} />
        <Picker $w={39}>150%<Caret /></Picker>
        <ToolRule $gap={11} />
        <Picker $w={66}>Normal text<Caret /></Picker>
        <ToolRule $gap={11} />
        <Picker $w={66}>Calibri<Caret /></Picker>
        <FontSize>
          <Tool aria-label="Smaller" $w={17}><MdRemove size={12} /></Tool>
          <SizeInput aria-label="Font size" defaultValue="12" />
          <Tool aria-label="Larger" $w={16}><MdAdd size={12} /></Tool>
        </FontSize>
        <Tool aria-label="Bold" $on $w={18}><MdFormatBold size={15} /></Tool>
        <Tool aria-label="Italic" $w={21}><MdFormatItalic size={15} /></Tool>
        <Tool aria-label="Underline"><MdFormatUnderlined size={14} /></Tool>
        <Tool aria-label="Text colour" $w={22}><svg width="15" height="15" viewBox="0 0 15 15"><path d="M4 10l3.500-9L11 10M5 7h5" stroke="#50555a" strokeWidth="1.400" fill="none" /><path d="M0 13.500h15" stroke="#000" strokeWidth="2.500" /></svg></Tool>
        <Tool aria-label="Highlight" $w={22}><svg width="12" height="12" viewBox="0 0 12 12"><path d="M8 1l3 3-5 5-3-3zM2.500 7l2.500 2.500L3 11 .5 11z" fill="#50555a" /></svg></Tool>
        <ToolRule $gap={3} />
        <Tool aria-label="Link"><MdLink size={15} /></Tool>
        <Tool aria-label="Comment"><MdOutlineAddComment size={13} /></Tool>
        <Tool aria-label="Image" $w={19}><MdOutlineImage size={14} /></Tool>
        <Tool aria-label="Image options" $w={9}><Caret /></Tool>
        <ToolRule $gap={5} />
        <Tool aria-label="Align left" $on $w={18}><MdFormatAlignLeft size={14} /></Tool>
        <Tool aria-label="Centre" $w={21}><MdFormatAlignCenter size={14} /></Tool>
        <Tool aria-label="Align right"><MdFormatAlignRight size={14} /></Tool>
        <Tool aria-label="Justify"><MdFormatAlignJustify size={14} /></Tool>
        <ToolRule />
        <Tool aria-label="Line spacing"><MdFormatLineSpacing size={15} /></Tool>
        <ToolRule />
        <Tool aria-label="Checklist" $w={21}><MdChecklist size={14} /></Tool>
        <Tool aria-label="Bullets" $on $w={19}><MdFormatListBulleted size={14} /></Tool>
        <Tool aria-label="Bullet options" $w={14}><Caret /></Tool>
        <Tool aria-label="Numbering"><MdFormatListNumbered size={14} /></Tool>
        <Tool aria-label="Numbering options" $w={13}><Caret /></Tool>
        <Tool aria-label="Decrease indent"><MdFormatIndentDecrease size={14} /></Tool>
        <Tool aria-label="Increase indent"><MdFormatIndentIncrease size={14} /></Tool>
        <ToolRule />
        <Tool aria-label="Clear formatting"><MdFormatClear size={14} /></Tool>
        <Spacer />
        <ModeButton><MdOutlineEdit size={12} />Editing<Spacer /><Caret /></ModeButton>
        <ToolRule />
        <Tool aria-label="Hide menus"><MdKeyboardArrowUp size={15} /></Tool>
      </EditToolbar>

      <Ruler>
        <RulerTrack>
          <RulerScale>
            {rulerNumbers.map((n, i) => (
              <RulerCell key={i}>
                <span>{n}</span>
                {i < 21 && <><RulerTick /><RulerTick $long /><RulerTick /></>}
              </RulerCell>
            ))}
          </RulerScale>
          <RulerMarker $x={60} $y={2} width="9" height="3"><rect width="9" height="3" fill="#3f76c9" /></RulerMarker>
          <RulerMarker $x={85} $y={5} width="8" height="5" viewBox="0 0 8 5"><path d="M0 0h8v1L4 5 0 1z" fill="#3b7ad8" /></RulerMarker>
          <RulerMarker $x={792} $y={5} width="8" height="5" viewBox="0 0 8 5"><path d="M0 0h8v1L4 5 0 1z" fill="#3b7ad8" /></RulerMarker>
        </RulerTrack>
      </Ruler>

      <Workspace>
        <LeftRail>
          <SideRuler>
            <SideScale>
              {sideNumbers.map((n) => (
                <SideCell key={n}>
                  <SideTick /><SideTick $long /><SideTick /><SideNumber>{n}</SideNumber>
                </SideCell>
              ))}
            </SideScale>
          </SideRuler>
          <OutlineButton aria-label="Show outline"><svg width="14" height="14" viewBox="0 0 14 14" fill="none" stroke="#80868b"><rect x="1" y="1" width="12" height="12" rx="1" strokeWidth="1.300" /><path d="M3 4.500h1M5 4.500h6M3 7h1M5 7h6M3 9.500h1M5 9.500h6" /></svg></OutlineButton>
        </LeftRail>
        <Page>
          <Question>
            <QuestionNumber>3.</QuestionNumber>
            <QuestionText>{'Reference Diagram Q3:  Synoptic Chart for'}</QuestionText>
            <DateBox>15th February 2007</DateBox>
          </Question>
          <Figure>
            <SynopticChart />
            <Note>{'Pay attention to the\ntime of year.\u00a0 It is\nFebruary, so\nnowhere is warm,\nrather some places\nwill be colder than\nothers.'}</Note>
          </Figure>
        </Page>
        <RightRail><ExploreButton aria-label="Explore"><MdAssistant size={15} /></ExploreButton></RightRail>
        <ScrollGutter>
          <ScrollThumb />
          <PanelToggle aria-label="Show side panel"><ChevronLeft size={12} /></PanelToggle>
        </ScrollGutter>
      </Workspace>

      <Taskbar>
        <StartButton aria-label="Start"><svg width="16" height="16" viewBox="0 0 16 16"><path d="M0 2.300L6.800 1.300v6.300H0zM7.600 1.200L16 0v7.600H7.600zM0 8.400h6.800v6.300L0 13.700zM7.600 8.400H16V16l-8.400-1.200z" fill="#fff" /></svg></StartButton>
        <SearchBox><SearchGlyph /><SearchInput type="search" placeholder="Type here to search" aria-label="Search" /></SearchBox>
        <TaskButton $w={47} aria-label="Task view"><TaskViewIcon /></TaskButton>
        <TaskButton $open aria-label="File Explorer"><ExplorerIcon /></TaskButton>
        <TaskButton $open aria-label="Chrome"><ChromeIcon /></TaskButton>
        <TaskButton $open $active aria-label="Chrome, second window"><ChromeIcon /></TaskButton>
        <TaskButton $open aria-label="Profile app"><PersonIcon size={22} card /></TaskButton>
        <TaskButton $open aria-label="Notebook"><NotebookIcon /></TaskButton>
        <TaskButton $open aria-label="Snipping Tool"><SnipIcon /></TaskButton>
        <Tray>
          <Weather><CloudIcon />7°C</Weather>
          {tray.map(([name, icon]) => <TrayButton key={name} aria-label={name}>{icon}</TrayButton>)}
          <Clock>08:45<br />30/09/2021</Clock>
          <DesktopEdge />
        </Tray>
      </Taskbar>

      <SideHandle aria-label="Open side tools">
        <svg width="13" height="11" viewBox="0 0 13 11"><path d="M0 0l6 5.500L0 11zM7 0l6 5.500L7 11z" fill="#77797b" /></svg>
        <svg width="13" height="18" viewBox="0 0 13 18"><path d="M1.500 0v18M6.500 0v18M11.500 0v18" stroke="#8b8e90" strokeWidth="3" strokeDasharray="3 2" /></svg>
      </SideHandle>

      <ShareNotice>
        <svg width="6" height="10" viewBox="0 0 6 10"><path d="M1 0v10M5 0v10" stroke="#a5a8ab" /></svg>
        <NoticeText>Screencastify - Screen Video Recorder is sharing your screen.</NoticeText>
        <StopButton>Stop sharing</StopButton>
        <HideButton>Hide</HideButton>
      </ShareNotice>

      <Recorder>
        <svg width="6" height="12" viewBox="0 0 6 12"><path d="M1 0v12M5 0v12" stroke="#ccc" strokeWidth="2" strokeDasharray="2 3" /></svg>
        <RecorderStack>
          <RoundButton aria-label="Pause"><svg width="6" height="8"><path d="M1 0v8M5 0v8" stroke="#222" strokeWidth="1.500" /></svg></RoundButton>
          <RoundButton $stop aria-label="Stop"><svg width="6" height="6"><rect width="6" height="6" fill="#fff" /></svg></RoundButton>
        </RecorderStack>
        <RecorderTool $on><svg width="17" height="17" viewBox="0 0 17 17"><circle cx="7" cy="7" r="6" fill="none" stroke="#e98a88" strokeWidth="1.500" /><path d="M8 4v10l2.500-2 2 4 1.500-1-2-3.500H16z" fill="#fff" /></svg>Mouse</RecorderTool>
        <RecorderTool><svg width="17" height="17" viewBox="0 0 17 17"><path d="M11 2l4 3-8 9-5 2 1-5z" fill="#e01b1b" /><path d="M5 11l7-7" stroke="#7d0f0f" /></svg>Pen</RecorderTool>
        <RecorderTool><svg width="17" height="17" viewBox="0 0 17 17"><path d="M2.500 2.500h12v12h-12z" fill="none" stroke="#e01b1b" strokeWidth="1.500" /></svg>Rectangle</RecorderTool>
        <RecorderTool><svg width="17" height="17" viewBox="0 0 17 17"><circle cx="8.500" cy="8.500" r="7.300" fill="#fbc02d" /><path d="M4 7q1.500-2 3 0M10 7q1.500-2 3 0M5 10q3.500 4 7 0" fill="none" stroke="#7a4a10" /><circle cx="4" cy="10" r="1.600" fill="#f08060" /><circle cx="13" cy="10" r="1.600" fill="#f08060" /></svg>Stickers</RecorderTool>
        <RecorderTool><svg width="17" height="17" viewBox="0 0 17 17"><path d="M10 2l5 3-7 9-5-2z" fill="#e08ba8" /><path d="M5 9l5 3-2 2-5-2z" fill="#f1bccc" /></svg>Eraser</RecorderTool>
        <WebcamButton><svg width="13" height="16" viewBox="0 0 13 16"><rect y="2" width="13" height="12" rx="2" fill="#1a8fc6" /><path d="M2 8h8v4H2zM10 9l2-1v4l-2-1z" fill="#fff" /><circle cx="5" cy="6" r="2" fill="#fff" /><circle cx="9" cy="6" r="1.500" fill="#fff" /></svg>START<br />WEBCAM</WebcamButton>
        <CollapseButton aria-label="Collapse"><ChevronLeft size={17} strokeWidth={2.4} /></CollapseButton>
      </Recorder>
    </Screen>
  );
}
